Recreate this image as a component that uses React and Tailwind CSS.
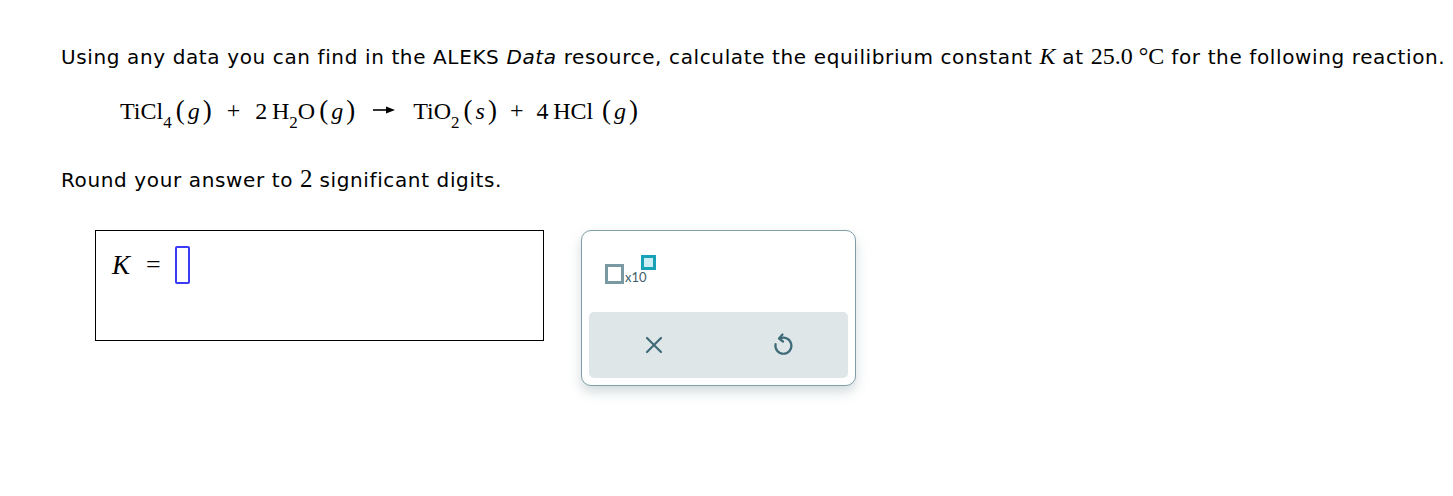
import React from 'react';

const sans = { fontFamily: '"DejaVu Sans", Verdana, sans-serif' };
const serif = { fontFamily: '"Liberation Serif", "Times New Roman", serif' };

function Sub({ children }) {
  return <sub className="text-[17px] relative top-[3px] align-sub leading-none">{children}</sub>;
}

function Phase({ s }) {
  return (
    <span>
      <span className="text-[27px] ml-[4px]">(</span>
      <i className="mx-[3px]">{s}</i>
      <span className="text-[27px]">)</span>
    </span>
  );
}

export default function App() {
  return (
    <div className="w-[1453px] h-[496px] bg-white text-black overflow-hidden" style={sans}>
      <div className="pl-[61px] pt-[42px]">
        <p className="text-[20px] tracking-[0.62px] leading-[28px] whitespace-nowrap">
          Using any data you can find in the ALEKS <i>Data</i> resource, calculate the equilibrium constant{' '}
          <span className="italic text-[24px] tracking-normal" style={serif}>K</span> at{' '}
          <span className="text-[24px] tracking-normal" style={serif}>25.0 °C</span> for the following reaction.
        </p>

        <div className="pl-[59px] mt-[21px] h-[36px] flex items-center text-[24px] whitespace-nowrap" style={serif}>
          <span>TiCl<Sub>4</Sub><Phase s="g" /></span>
          <span className="mx-[15px]">+</span>
          <span>2&thinsp;H<Sub>2</Sub>O<Phase s="g" /></span>
          <span className="mx-[17px] flex items-center">
            <svg width="24" height="10" viewBox="0 0 24 10">
              <path d="M1 5 H16" stroke="#000" strokeWidth="1.6" />
              <path d="M14 1.5 L23 5 L14 8.5 Z" fill="#000" />
            </svg>
          </span>
          <span>TiO<Sub>2</Sub><Phase s="s" /></span>
          <span className="mx-[13px]">+</span>
          <span>4&thinsp;HCl&thinsp;<Phase s="g" /></span>
        </div>

        <p className="mt-[37px] text-[20px] tracking-[0.62px] leading-[28px] whitespace-nowrap">
          Round your answer to <span className="text-[25px] tracking-normal" style={serif}>2</span> significant digits.
        </p>
      </div>

      <div className="flex items-start mt-[36px] pl-[95px]">
        <div className="w-[449px] h-[111px] border border-black flex items-start pt-[15px] pl-[16px]">
          <span className="italic text-[27px] leading-[38px]" style={serif}>K</span>
          <span className="ml-[16px] text-[26px] leading-[38px]" style={serif}>=</span>
          <span className="ml-[14px] w-[15px] h-[38px] border-2 border-[#3b3bf5] rounded-[2px]" />
        </div>

        <div className="ml-[37px] w-[275px] h-[156px] rounded-[10px] border border-[#7f9ea7] bg-white shadow-[0_6px_12px_rgba(80,110,120,0.25)] px-[7px] pt-[23px]">
          <div className="relative h-[58px] pl-[17px]">
            <div className="absolute left-[16px] top-[10px] w-[19px] h-[20px] border-[3px] border-[#7a9aa3]" />
            <span className="absolute left-[36px] top-[17px] text-[13px] text-[#41606b] leading-none" style={{ fontFamily: 'Lato, sans-serif' }}>x10</span>
            <div className="absolute left-[52px] top-[1px] w-[15px] h-[15px] border-[3px] border-[#17a2b8] bg-[#cdeff4]" />
          </div>
          <div className="h-[66px] rounded-[5px] bg-[#dfe6e8] flex items-center">
            <div className="flex-1 flex justify-center">
              <svg width="20" height="20" viewBox="0 0 20 20" fill="none" stroke="#3f6b79" strokeWidth="2.2" strokeLinecap="round">
                <path d="M3 3 L17 17 M17 3 L3 17" />
              </svg>
            </div>
            <div className="flex-1 flex justify-center">
              <svg width="22" height="24" viewBox="0 0 22 24" fill="none" stroke="#3f6b79" strokeWidth="2.2" strokeLinecap="round" strokeLinejoin="round">
                <path d="M8 5.5 A8 8 0 1 1 3.6 11" />
                <path d="M10.5 1.5 L7 5.5 L11 8.5" />
              </svg>
            </div>
          </div>
        </div>
      </div>
    </div>
  );
}
